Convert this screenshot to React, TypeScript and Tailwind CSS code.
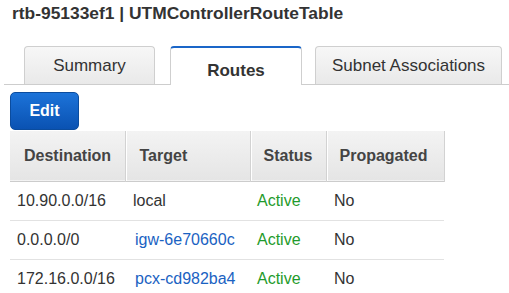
import React from "react";

const rows = [
  { dest: "10.90.0.0/16", target: "local", link: false },
  { dest: "0.0.0.0/0", target: "igw-6e70660c", link: true },
  { dest: "172.16.0.0/16", target: "pcx-cd982ba4", link: true },
];

export default function App() {
  return (
    <div
      className="w-[509px] h-[293px] overflow-hidden bg-white text-[#333]"
      style={{ fontFamily: '"Liberation Sans", Arial, Helvetica, sans-serif' }}
    >
      <div className="pl-[12px] pt-[1px] text-[17.4px] leading-[24px] font-bold text-[#333]">
        rtb-95133ef1 | UTMControllerRouteTable
      </div>

      <div className="ml-[4px] mt-[21px] h-[39px] flex items-end border-b border-[#cdcdcd] pl-[20px]">
        <div className="w-[131px] h-[38px] flex items-center justify-center rounded-t-[4px] border border-b-0 border-[#cfcfcf] bg-linear-to-b from-[#f7f7f7] to-[#e9e9e9] text-[17px] text-[#333]">
          Summary
        </div>
        <div className="ml-[15px] w-[132px] h-[39px] -mb-px flex items-start justify-center pt-[10px] rounded-t-[4px] border border-b-0 border-[#cfcfcf] border-t-2 border-t-[#1a66c8] bg-white text-[17px] font-bold text-[#333]">
          Routes
        </div>
        <div className="ml-[13px] w-[187px] h-[38px] flex items-center justify-center rounded-t-[4px] border border-b-0 border-[#cfcfcf] bg-linear-to-b from-[#f7f7f7] to-[#e9e9e9] text-[17px] text-[#333]">
          Subnet Associations
        </div>
      </div>

      <div className="ml-[10px] mt-[7px] w-[69px] h-[38px] flex items-center justify-center rounded-[5px] border border-[#0b4c9e] bg-linear-to-b from-[#1c73d9] to-[#0a52b2] text-white text-[16px] font-bold">
        Edit
      </div>

      <table className="ml-[10px] mt-[1px] w-[434px] border-collapse table-fixed text-[16px]">
        <colgroup>
          <col className="w-[115px]" />
          <col className="w-[125px]" />
          <col className="w-[76px]" />
          <col className="w-[118px]" />
        </colgroup>
        <thead>
          <tr className="h-[50px] bg-linear-to-b from-[#f3f3f3] to-[#e5e5e5] border-b border-[#cccccc]">
            <th className="text-left font-bold text-[#444] pl-[14px] p-0">Destination</th>
            <th className="text-left font-bold text-[#444] pl-[14px] p-0 border-l border-[#d2d2d2] shadow-[inset_1px_0_0_#fff]">Target</th>
            <th className="text-left font-bold text-[#444] pl-[13px] p-0 border-l border-[#d2d2d2] shadow-[inset_1px_0_0_#fff]">Status</th>
            <th className="text-left font-bold text-[#444] pl-[13px] p-0 border-l border-r border-[#d2d2d2] shadow-[inset_1px_0_0_#fff]">Propagated</th>
          </tr>
        </thead>
        <tbody>
          {rows.map((r) => (
            <tr key={r.dest} className="h-[39px] border-b border-[#e2e2e2]">
              <td className="pl-[7px] p-0 text-[#333]">{r.dest}</td>
              <td className="pl-[8px] p-0">
                {r.link ? (
                  <span className="ml-[2px] text-[#1a62c2]">{r.target}</span>
                ) : (
                  <span className="text-[#333]">{r.target}</span>
                )}
              </td>
              <td className="pl-[7px] p-0 text-[#1f9b2c]">Active</td>
              <td className="pl-[8px] p-0 text-[#333]">No</td>
            </tr>
          ))}
        </tbody>
      </table>
    </div>
  );
}
